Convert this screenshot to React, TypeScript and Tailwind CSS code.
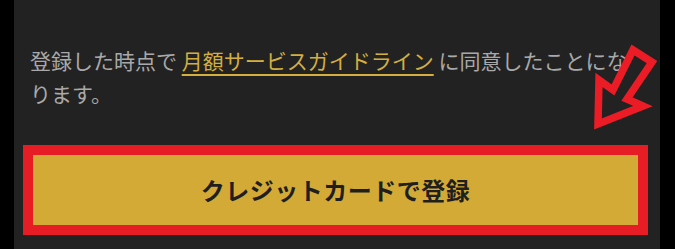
import React from 'react';

const App: React.FC = () => {
  return (
    <div
      className="relative w-[675px] h-[249px] bg-black flex overflow-hidden"
      style={{ fontFamily: '"Noto Sans CJK JP", "Noto Sans", sans-serif' }}
    >
      <div className="ml-[14px] w-[646px] h-full bg-[#222222] flex flex-col">
        <p className="pt-[44px] pl-[16px] pr-[14px] text-[21px] leading-[33px] text-[#a9a9a9]">
          登録した時点で{' '}
          <span className="text-[#d4ae3f] underline decoration-2 underline-offset-[5px]">
            月額サービスガイドライン
          </span>{' '}
          に同意したことになります。
        </p>
        <div className="mt-[35px] ml-[9px] mr-[12px] border-[10px] border-[#e61d25]">
          <button className="w-full h-[70px] bg-[#d4aa36] flex items-center justify-center text-[24px] font-bold text-[#1f1f1f] tracking-[0.5px]">
            クレジットカードで登録
          </button>
        </div>
      </div>

      {/* red arrow pointing at the button */}
      <svg
        className="absolute left-[585px] top-[38px]"
        width="80"
        height="100"
        viewBox="585 38 80 100"
      >
        <polygon
          points="633,50 652,62 627,99 643,106 598,124 599,80 613,90"
          fill="none"
          stroke="#ec1c26"
          strokeWidth="7.5"
          strokeLinejoin="miter"
        />
      </svg>
    </div>
  );
};

export default App;
